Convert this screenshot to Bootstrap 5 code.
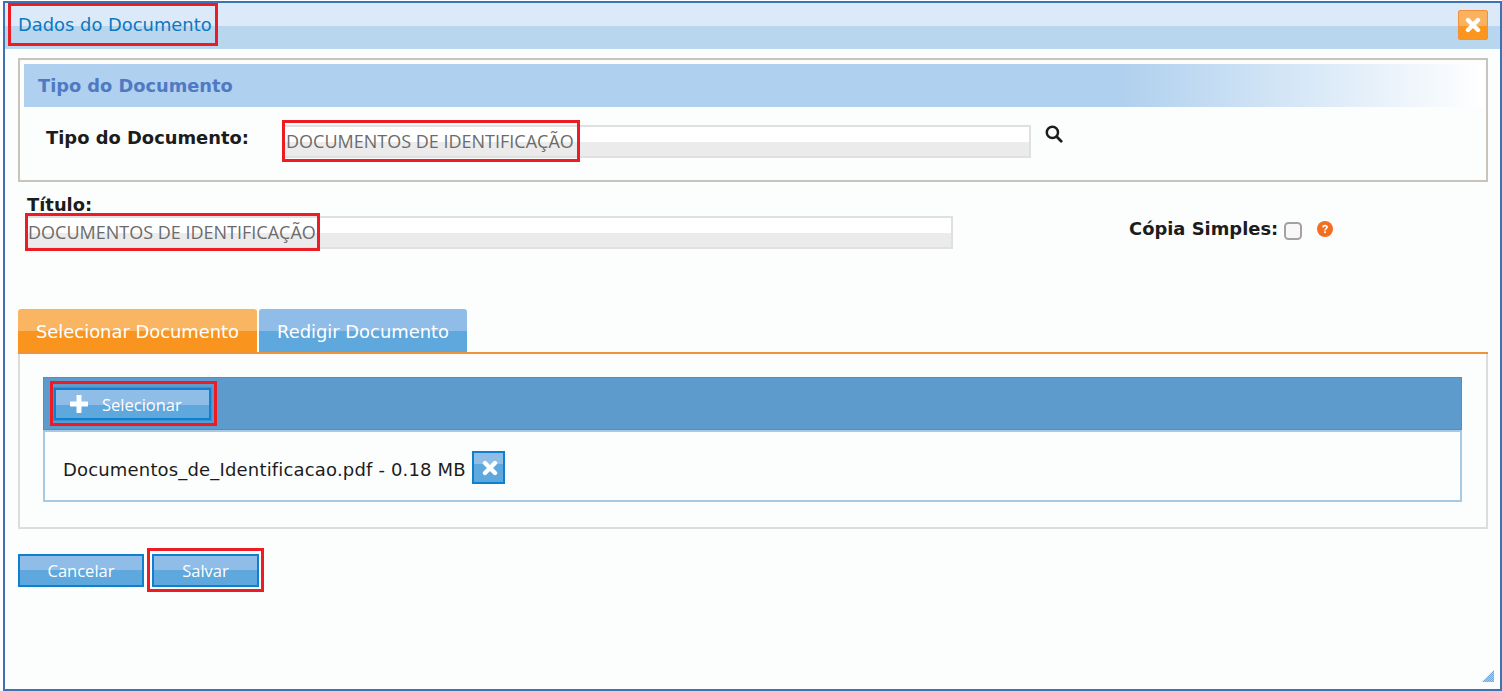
<!DOCTYPE html>
<html lang="pt-BR">
<head>
  <meta charset="UTF-8" />
  <meta name="viewport" content="width=device-width, initial-scale=1.0"/>
  <title>Dados do Documento</title>
  <link href="https://cdn.jsdelivr.net/npm/bootstrap@5.3.3/dist/css/bootstrap.min.css" rel="stylesheet">
  <style>
    body { background: #fff; font-family: "DejaVu Sans", sans-serif; font-size: 18px; color: #1c1c1c; overflow: hidden; }
    .janela { margin: 1px 0 0 3px; width: 1499px; height: 690px; border: 2px solid #3b73b4; background: #fcfefe; position: relative; }

    /* red annotation boxes from the screenshot */
    .alvo { position: relative; display: inline-block; }
    .marca { position: absolute; border: 3px solid #ed1c24; pointer-events: none; }
    .marca-tipo { left: -1px; top: -5px; width: 298px; height: 42px; }
    .marca-titulo { left: -1px; top: -3px; width: 295px; height: 38px; }
    .marca-selecionar { left: -4px; top: -7px; width: 167px; height: 45px; }
    .marca-salvar { left: -5px; top: -6px; width: 117px; height: 44px; }

    .barra-titulo { height: 46px; padding: 0 12px 0 3px; background: linear-gradient(#dce9f8 23px, #b8d7ef 23px); }
    .titulo-texto { width: 210px; height: 43px; padding-left: 7px; line-height: 37px; font-size: 17.9px; color: #0b78c2; border: 3px solid #ed1c24; white-space: nowrap; }
    .btn-fechar { width: 30px; height: 30px; margin-top: 7px; padding: 0; border: 1px solid #f48f3a; border-radius: 2px; background: linear-gradient(#fbb25f 15px, #fb951f 15px); }

    .conteudo { padding: 9px 12px 0 13px; }
    .caixa-tipo { height: 124px; border: 2px solid #c8c3bd; padding: 4px 2px 0 4px; }
    .caixa-cabecalho { height: 43px; padding: 2px 0 0 14px; color: #5079c4; font-weight: 700; font-size: 17.8px; background: linear-gradient(to right, #afd0ee 75%, #fff 100%); }
    .linha-tipo { padding: 18px 0 0 22px; }
    .rotulo { font-weight: 700; font-size: 17.9px; color: #1c1c1c; }
    .rotulo-tipo { width: 237px; line-height: 26px; }
    .campo { display: block; font-family: "Open Sans", sans-serif; font-size: 18px; color: #6b6b6b; height: 33px; padding: 0 1px 2px; border: 2px solid #e0e0e0; border-radius: 0; background: linear-gradient(#fff 15px, #ebebeb 15px); }
    .campo-tipo { width: 748px; }
    .campo-titulo { width: 927px; padding-left: 0; }
    .campo:focus { outline: none; }
    .icone-lupa { margin: 0 0 0 14px; }
    .linha-titulo { height: 127px; padding-top: 13px; }
    .coluna-titulo { margin-left: 8px; }
    .rotulo-titulo { margin: 0 0 2px 1px; line-height: 19px; }
    .bloco-copia { margin: 21px 0 0 176px; }
    .check-copia { width: 18px; height: 18px; margin: 4px 0 0 6px; border: 2px solid #a5a19f; border-radius: 4px; background-color: #f8f8f8; }
    .icone-ajuda { margin: 0 0 0 15px; }

    .abas { border-bottom: 2px solid #f0923a; gap: 2px; height: 45px; }
    .abas .nav-link { width: 208px; height: 43px; padding: 3px 18px 0; border: 0; border-radius: 3px 3px 0 0; color: #fff; font-size: 17.9px; white-space: nowrap; background: linear-gradient(#8fbde8 22px, #5ea8de 22px); }
    .abas .nav-link.active { color: #fff; width: 239px; background: linear-gradient(#fab563 22px, #f9951f 22px); }
    .painel { height: 175px; padding: 23px 24px 0 23px; border: 2px solid #ddd; border-top: 0; }
    .upload-barra { height: 53px; padding: 10px; background: #5d9bcd; border: 1px solid #4a90cc; }
    .upload-lista { height: 72px; padding: 19px 18px 0; border: 2px solid #a6c9e4; }
    .upload-nome { line-height: 38px; letter-spacing: .17px; }
    .btn-azul { font-family: "Open Sans", sans-serif; font-size: 16.5px; color: #fff; height: 33px; padding: 2px 0 0; border: 2px solid #0f7fd0; border-radius: 0; background: linear-gradient(#8fbde8 14px, #5ea8de 14px); }
    .btn-azul:hover { color: #fff; border-color: #0f7fd0; }
    .btn-selecionar { width: 157px; height: 32px; padding-left: 14px; box-shadow: 0 0 0 1px #3d8fd6; background: linear-gradient(#8fbde8 15px, #5ea8de 15px); }
    .btn-selecionar svg { margin: -2px 14px 0 0; }
    .btn-remover { width: 33px; margin-left: 6px; padding: 0 0 0 3px; background: linear-gradient(#8fbde8 11px, #5ea8de 11px); }
    .rodape-botoes { padding-top: 25px; gap: 8px; }
    .btn-cancelar { width: 126px; }
    .btn-salvar { width: 107px; }
    .grip { position: absolute; right: 6px; bottom: 7px; }
  </style>
</head>
<body>
<div class="janela">

  <!-- Title bar -->
  <div class="barra-titulo d-flex align-items-start justify-content-between">
    <span class="titulo-texto">Dados do Documento</span>
    <button class="btn-fechar d-flex align-items-center justify-content-center" aria-label="Fechar">
      <svg width="16" height="16" viewBox="0 0 16 16"><path d="M3 3l10 10M13 3L3 13" stroke="#fff" stroke-width="4.4" stroke-linecap="round"/></svg>
    </button>
  </div>

  <div class="conteudo">
    <!-- Tipo do Documento -->
    <div class="caixa-tipo">
      <div class="caixa-cabecalho d-flex align-items-center">Tipo do Documento</div>
      <div class="linha-tipo d-flex align-items-start">
        <label class="rotulo rotulo-tipo">Tipo do Documento:</label>
        <div class="alvo">
          <input class="campo campo-tipo" value="DOCUMENTOS DE IDENTIFICAÇÃO" readonly>
          <span class="marca marca-tipo"></span>
        </div>
        <svg class="icone-lupa" width="18" height="18" viewBox="0 0 18 18"><circle cx="7.4" cy="7.4" r="5.6" fill="none" stroke="#1c1c1c" stroke-width="2.5"/><path d="M11.8 11.8l4.4 4.4" stroke="#1c1c1c" stroke-width="2.8" stroke-linecap="round"/></svg>
      </div>
    </div>

    <!-- Titulo + copia simples -->
    <div class="linha-titulo d-flex align-items-start">
      <div class="coluna-titulo">
        <div class="rotulo rotulo-titulo">Título:</div>
        <div class="alvo">
          <input class="campo campo-titulo" value="DOCUMENTOS DE IDENTIFICAÇÃO" readonly>
          <span class="marca marca-titulo"></span>
        </div>
      </div>
      <div class="bloco-copia d-flex align-items-center">
        <span class="rotulo">Cópia Simples:</span>
        <input class="form-check-input check-copia" type="checkbox">
        <svg class="icone-ajuda" width="16" height="16" viewBox="0 0 16 16"><circle cx="8" cy="8" r="8" fill="#f26f21"/><path d="M5.2 6.2C5.3 4.6 6.5 3.8 8 3.8c1.6 0 2.9.9 2.9 2.3 0 1.1-.7 1.6-1.4 2.1-.6.4-.8.7-.8 1.2H7.2c0-1 .4-1.5 1.1-2 .5-.4.8-.6.8-1.1 0-.5-.5-.8-1.1-.8-.7 0-1.1.4-1.2 1.1z" fill="#fff"/><rect x="7.1" y="10.3" width="1.7" height="1.8" fill="#fff"/></svg>
      </div>
    </div>

    <!-- Tabs -->
    <ul class="nav abas">
      <li class="nav-item"><a class="nav-link active d-flex align-items-center" href="#">Selecionar Documento</a></li>
      <li class="nav-item"><a class="nav-link d-flex align-items-center" href="#">Redigir Documento</a></li>
    </ul>
    <div class="painel">
      <div class="upload-barra">
        <div class="alvo">
          <button class="btn btn-azul btn-selecionar d-flex align-items-center">
            <svg width="18" height="18" viewBox="0 0 16 16"><path d="M8 1v14M1 8h14" stroke="#fff" stroke-width="4.4" stroke-linecap="round"/></svg>
            Selecionar
          </button>
          <span class="marca marca-selecionar"></span>
        </div>
      </div>
      <div class="upload-lista d-flex align-items-start">
        <span class="upload-nome">Documentos_de_Identificacao.pdf - 0.18 MB</span>
        <button class="btn btn-azul btn-remover d-flex align-items-center justify-content-center" aria-label="Remover">
          <svg width="16" height="16" viewBox="0 0 16 16"><path d="M3 3l10 10M13 3L3 13" stroke="#fff" stroke-width="4.4" stroke-linecap="round"/></svg>
        </button>
      </div>
    </div>

    <div class="rodape-botoes d-flex">
      <button class="btn btn-azul btn-cancelar">Cancelar</button>
      <div class="alvo">
        <button class="btn btn-azul btn-salvar">Salvar</button>
        <span class="marca marca-salvar"></span>
      </div>
    </div>
  </div>

  <svg class="grip" width="12" height="12" viewBox="0 0 12 12">
    <defs><pattern id="xadrez" width="2" height="2" patternUnits="userSpaceOnUse"><rect width="2" height="2" fill="#a9cdee"/><rect width="1" height="1" fill="#6fa8de"/><rect x="1" y="1" width="1" height="1" fill="#6fa8de"/></pattern></defs>
    <path d="M12 0v12H0z" fill="url(#xadrez)"/>
  </svg>
</div>
</body>
</html>
